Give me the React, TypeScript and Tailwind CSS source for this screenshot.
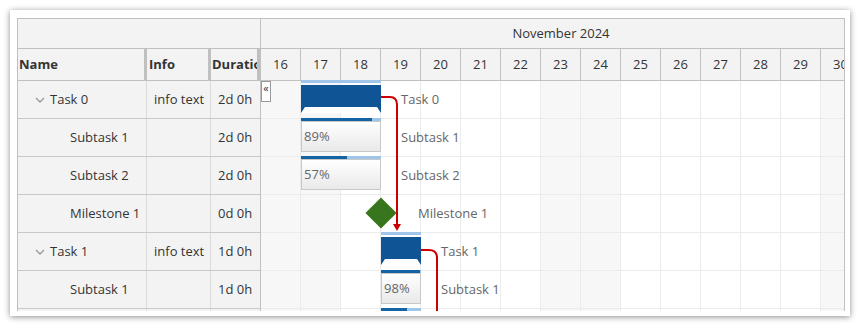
import React from "react";

const days = [16, 17, 18, 19, 20, 21, 22, 23, 24, 25, 26, 27, 28, 29, 30];
const weekend = [16, 17, 23, 24, 30];

type Row = { name: string; info?: string; duration: string; level: number; parent?: boolean };

const rows: Row[] = [
  { name: "Task 0", info: "info text", duration: "2d 0h", level: 0, parent: true },
  { name: "Subtask 1", duration: "2d 0h", level: 1 },
  { name: "Subtask 2", duration: "2d 0h", level: 1 },
  { name: "Milestone 1", duration: "0d 0h", level: 1 },
  { name: "Task 1", info: "info text", duration: "1d 0h", level: 0, parent: true },
  { name: "Subtask 1", duration: "1d 0h", level: 1 },
  // last row is cut off by the bottom edge
  { name: "", duration: "", level: 1 },
];

function Chevron() {
  return (
    <svg width="10" height="8" viewBox="0 0 10 8" className="mr-[5px]">
      <polyline points="1,2 5,6 9,2" fill="none" stroke="#999" strokeWidth="1.3" />
    </svg>
  );
}

// summary bar (blue with the notch at the bottom)
function SummaryBar({ top, left, width }: { top: number; left: number; width: number }) {
  return (
    <div className="absolute" style={{ top, left, width, height: 34 }}>
      <div className="h-[3px] bg-[#9fc5e8]" />
      <div className="mt-[2px] h-[28px] relative bg-[#0f5596]">
        <svg className="absolute bottom-0 left-0" width={width} height="6" viewBox={`0 0 ${width} 6`}>
          <polygon points={`4,0 ${width - 4},0 ${width},6 0,6`} fill="#fff" />
        </svg>
      </div>
    </div>
  );
}

function TaskBar({ top, left, width, pct }: { top: number; left: number; width: number; pct: number }) {
  return (
    <div className="absolute" style={{ top, left, width }}>
      <div className="h-[3px] bg-[#9fc5e8] flex">
        <div className="h-full bg-[#1463a5]" style={{ width: `${pct}%` }} />
      </div>
      <div className="h-[31px] border border-[#c8c8c8] bg-gradient-to-b from-white to-[#e9e9e9] flex items-center pl-[2px] text-[13px] text-[#666]">
        {pct}%
      </div>
    </div>
  );
}

function Label({ top, left, text }: { top: number; left: number; text: string }) {
  return (
    <div className="absolute text-[13px] text-[#666] leading-[38px] whitespace-nowrap" style={{ top, left }}>
      {text}
    </div>
  );
}

export default function App() {
  return (
    <div className="w-[860px] h-[326px] bg-white pt-[10px] pl-[10px]" style={{ fontFamily: '"Open Sans", "Noto Sans", sans-serif' }}>
      <div className="w-[840px] h-[306px] bg-white shadow-[0_1px_6px_rgba(0,0,0,0.45)] pt-[8px] pl-[7px]">
        <div className="w-[828px] h-[293px] border-l border-t border-r border-[#c0c0c0] overflow-hidden flex text-[#333] text-[13px]">
          {/* left grid */}
          <div className="w-[243px] shrink-0 border-r border-[#c0c0c0] bg-[#f3f3f3]">
            <div className="h-[30px] border-b border-[#c0c0c0]" />
            <div className="h-[32px] border-b border-[#c0c0c0] flex font-bold">
              <div className="w-[129px] border-r-[3px] border-[#c0c0c0] pl-[1px] flex items-center">Name</div>
              <div className="w-[64px] border-r-[3px] border-[#c0c0c0] pl-[2px] flex items-center">Info</div>
              <div className="w-[49px] border-r-[3px] border-[#c0c0c0] pl-[1px] flex items-center overflow-hidden whitespace-nowrap">Duratio</div>
            </div>
            {rows.map((r, i) => (
              <div key={i} className="h-[38px] border-b border-[#c8c8c8] flex">
                <div className="w-[129px] border-r border-[#dcdcdc] flex items-center" style={{ paddingLeft: r.parent ? 17 : 52 }}>
                  {r.parent && <Chevron />}
                  {r.name}
                </div>
                <div className="w-[64px] border-r border-[#dcdcdc] flex items-center pl-[7px] whitespace-nowrap">{r.info}</div>
                <div className="w-[49px] flex items-center pl-[7px]">{r.duration}</div>
              </div>
            ))}
          </div>

          {/* timeline */}
          <div className="w-[600px] shrink-0">
            <div className="h-[30px] border-b border-[#c0c0c0] bg-[#f3f3f3] flex items-center justify-center">November 2024</div>
            <div className="h-[32px] border-b border-[#c0c0c0] bg-[#f3f3f3] flex">
              {days.map((d) => (
                <div key={d} className="w-[40px] border-r border-[#c0c0c0] flex items-center justify-center">{d}</div>
              ))}
            </div>
            <div className="relative">
              {rows.map((_, i) => (
                <div key={i} className="h-[38px] flex">
                  {days.map((d) => (
                    <div
                      key={d}
                      className={`w-[40px] border-r border-b border-[#ebebeb] ${weekend.includes(d) ? "bg-[#f7f7f7]" : "bg-white"}`}
                    />
                  ))}
                </div>
              ))}

              <div className="absolute top-0 left-0 w-[10px] h-[21px] border border-[#999] bg-white text-[11px] leading-[11px] text-center text-[#333]">«</div>

              <SummaryBar top={-1} left={40} width={80} />
              <TaskBar top={37} left={40} width={80} pct={89} />
              <TaskBar top={75} left={40} width={80} pct={57} />
              <div className="absolute w-[22px] h-[22px] bg-[#38761d] rotate-45" style={{ top: 121, left: 109 }} />
              <SummaryBar top={151} left={120} width={40} />
              <TaskBar top={189} left={120} width={40} pct={98} />
              <TaskBar top={227} left={120} width={40} pct={64} />

              <Label top={-1} left={140} text="Task 0" />
              <Label top={37} left={140} text="Subtask 1" />
              <Label top={75} left={140} text="Subtask 2" />
              <Label top={113} left={157} text="Milestone 1" />
              <Label top={151} left={180} text="Task 1" />
              <Label top={189} left={180} text="Subtask 1" />

              <svg className="absolute top-0 left-0 pointer-events-none" width="600" height="266">
                <path d="M120 16 H129 Q136 16 136 24 V143" fill="none" stroke="#cc0000" strokeWidth="2" />
                <polygon points="132,143 140,143 136,150" fill="#cc0000" />
                <path d="M160 169 H168 Q176 169 176 177 V266" fill="none" stroke="#cc0000" strokeWidth="2" />
              </svg>
            </div>
          </div>
        </div>
      </div>
    </div>
  );
}
